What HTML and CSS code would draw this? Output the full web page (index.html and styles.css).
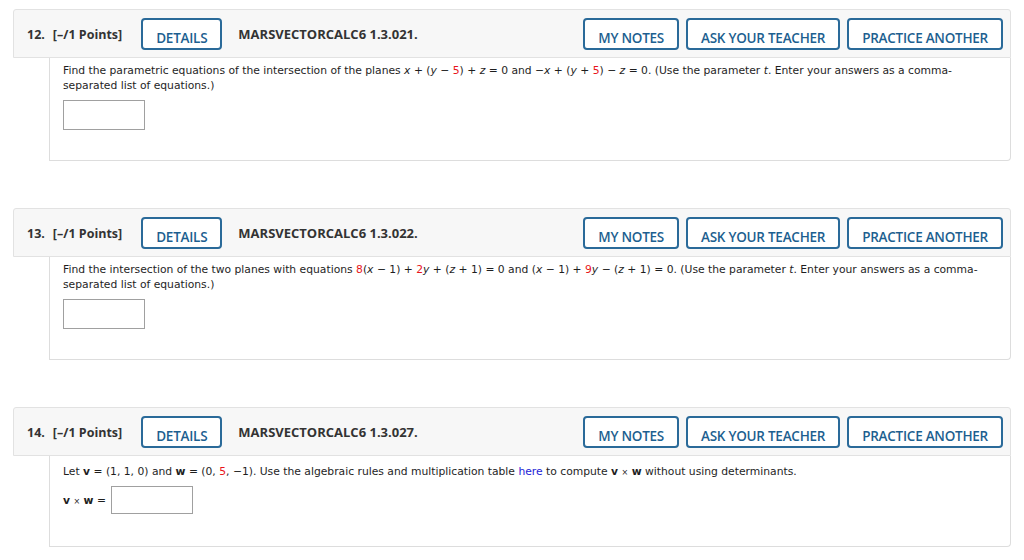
FILE: index.html
```html
<!DOCTYPE html>
<html>
<head>
<meta charset="utf-8">
<link rel="stylesheet" href="styles.css">
</head>
<body>
<div class="page">

  <div class="question">
    <div class="qhead">
      <span class="qnum">12.</span>
      <span class="qpts">[–/1 Points]</span>
      <button class="btn btn-details">DETAILS</button>
      <span class="qid">MARSVECTORCALC6 1.3.021.</span>
      <span class="spacer"></span>
      <button class="btn">MY NOTES</button>
      <button class="btn">ASK YOUR TEACHER</button>
      <button class="btn">PRACTICE ANOTHER</button>
    </div>
    <div class="qbody">
      <p class="qtext">Find the parametric equations of the intersection of the planes <i>x</i> + (<i>y</i> − <span class="red">5</span>) + <i>z</i> = 0 and −<i>x</i> + (<i>y</i> + <span class="red">5</span>) − <i>z</i> = 0. (Use the parameter <i>t</i>. Enter your answers as a comma-separated list of equations.)</p>
      <input class="answer" type="text">
    </div>
  </div>

  <div class="question">
    <div class="qhead">
      <span class="qnum">13.</span>
      <span class="qpts">[–/1 Points]</span>
      <button class="btn btn-details">DETAILS</button>
      <span class="qid">MARSVECTORCALC6 1.3.022.</span>
      <span class="spacer"></span>
      <button class="btn">MY NOTES</button>
      <button class="btn">ASK YOUR TEACHER</button>
      <button class="btn">PRACTICE ANOTHER</button>
    </div>
    <div class="qbody">
      <p class="qtext">Find the intersection of the two planes with equations <span class="red">8</span>(<i>x</i> − 1) + <span class="red">2</span><i>y</i> + (<i>z</i> + 1) = 0 and (<i>x</i> − 1) + <span class="red">9</span><i>y</i> − (<i>z</i> + 1) = 0. (Use the parameter <i>t</i>. Enter your answers as a comma-separated list of equations.)</p>
      <input class="answer" type="text">
    </div>
  </div>

  <div class="question">
    <div class="qhead">
      <span class="qnum">14.</span>
      <span class="qpts">[–/1 Points]</span>
      <button class="btn btn-details">DETAILS</button>
      <span class="qid">MARSVECTORCALC6 1.3.027.</span>
      <span class="spacer"></span>
      <button class="btn">MY NOTES</button>
      <button class="btn">ASK YOUR TEACHER</button>
      <button class="btn">PRACTICE ANOTHER</button>
    </div>
    <div class="qbody qbody-cross">
      <p class="qtext">Let <b>v</b> = (1, 1, 0) and <b>w</b> = (0, <span class="red">5</span>, −1). Use the algebraic rules and multiplication table <a class="link" href="#">here</a> to compute <b>v</b> <span class="times">×</span> <b>w</b> without using determinants.</p>
      <div class="answer-row">
        <span class="label"><b>v</b> <span class="times">×</span> <b>w</b> =</span>
        <input class="answer answer-small" type="text">
      </div>
    </div>
  </div>

</div>
</body>
</html>
```

FILE: styles.css
```css
* { box-sizing: border-box; }

html, body {
  margin: 0;
  padding: 0;
  background: #ffffff;
}

.page {
  padding: 9px 0 0 13px;
  width: 1011px;
  font-family: "DejaVu Sans", Verdana, sans-serif;
  color: #222;
}

.question {
  margin-bottom: 47px;
}

.qhead {
  display: flex;
  align-items: center;
  height: 49px;
  padding: 8px 7px 7px 13px;
  background: #f7f7f7;
  border: 1px solid #e2e2e2;
  border-radius: 3px 3px 0 0;
  font-family: "Open Sans", sans-serif;
  font-weight: 700;
  font-size: 12.5px;
  color: #333;
}

.qnum {
  margin-right: 8px;
}

.qpts {
  margin-right: 19px;
}

.qid {
  margin-left: 16px;
  font-size: 13px;
}

.spacer {
  flex: 1;
}

.btn {
  height: 32px;
  margin-left: 7px;
  padding: 9px 13px 0;
  background: #ffffff;
  border: 2px solid #2a6a99;
  border-radius: 4px;
  font-family: "Open Sans", sans-serif;
  font-weight: 600;
  font-size: 13.5px;
  line-height: 19px;
  letter-spacing: -0.25px;
  color: #1d5f90;
  align-self: flex-start;
  white-space: nowrap;
}

.btn-details {
  margin-left: 0;
}

.qbody {
  margin-left: 36px;
  padding: 5px 20px 30px 13px;
  background: #ffffff;
  border: 1px solid #dddddd;
  border-top: 0;
  border-radius: 0 0 4px 0;
}

.qbody-cross {
  padding-top: 8px;
  padding-bottom: 32px;
}

.qtext {
  margin: 0;
  font-size: 10.75px;
  line-height: 15px;
  color: #1e1e1e;
}

.qtext i {
  font-style: italic;
}

.red {
  color: #e8141b;
}

.link {
  color: #2323d6;
  text-decoration: none;
}

.times {
  font-size: 8px;
}

.answer {
  display: block;
  margin-top: 7px;
  width: 82px;
  height: 30px;
  border: 1px solid #a0a0a0;
  background: #fff;
  padding: 0;
}

.answer-row {
  display: flex;
  align-items: center;
  margin-top: 6px;
  font-size: 10.75px;
  color: #1e1e1e;
}

.label {
  margin-right: 5px;
}

.answer-small {
  margin-top: 0;
  height: 28px;
}
```
